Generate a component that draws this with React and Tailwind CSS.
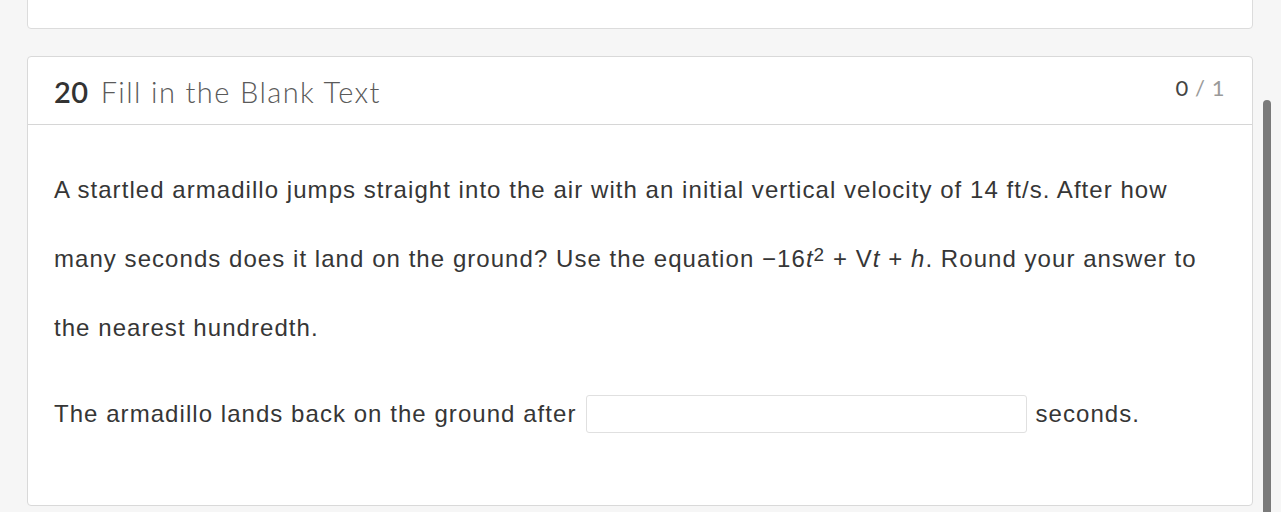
export default function App() {
  return (
    <div className="relative h-[512px] overflow-hidden bg-[#f6f6f6]" style={{ fontFamily: '"Liberation Sans", Arial, sans-serif' }}>
      <div className="pl-[27px] pr-[28px]">
        {/* previous question card (cut off) */}
        <div className="-mt-[20px] h-[49px] rounded-b-[4px] border border-[#dcdcdc] bg-white" />

        {/* question 20 */}
        <div className="mt-[27px] h-[450px] rounded-[4px] border border-[#d9d9d9] bg-white">
          <div className="flex h-[68px] items-start justify-between border-b border-[#d6d6d6] pl-[26px] pr-[27px]">
            <div className="mt-[17px] flex items-baseline gap-[12px] font-['Lato',sans-serif] text-[29px] leading-[36px]">
              <span className="font-semibold tracking-[0.5px] text-[#333]">20</span>
              <span className="font-light tracking-[1.4px] text-[#5a5a5a]">Fill in the Blank Text</span>
            </div>
            <div className="mt-[14px] font-['Lato',sans-serif] text-[22px] tracking-wide">
              <span className="text-[#444]">0</span>
              <span className="text-[#9a9a9a]"> / 1</span>
            </div>
          </div>
          <div className="px-[26px] pt-[32px] text-[24px] tracking-[1.05px] text-[#363636]">
            <p className="-mt-[2px] whitespace-nowrap leading-[69px]">
              A startled armadillo jumps straight into the air with an initial vertical velocity of 14 ft/s. After how
              <br />
              many seconds does it land on the ground? Use the equation −16<i>t</i>
              <sup className="-top-[0.3em] text-[19px]">2</sup> + V<i>t</i> + <i>h</i>. Round your answer to
              <br />
              the nearest hundredth.
            </p>
            <div className="mt-[33px] flex items-center gap-[9px] whitespace-nowrap">
              <span>The armadillo lands back on the ground after</span>
              <input className="h-[38px] w-[441px] shrink-0 rounded-[3px] border border-[#e0e0e0] bg-white outline-none" />
              <span>seconds.</span>
            </div>
          </div>
        </div>
      </div>

      {/* scrollbar thumb */}
      <div className="absolute left-[1263px] top-[100px] h-[430px] w-[8px] rounded-full bg-[#7a7a7a]" />
    </div>
  );
}
